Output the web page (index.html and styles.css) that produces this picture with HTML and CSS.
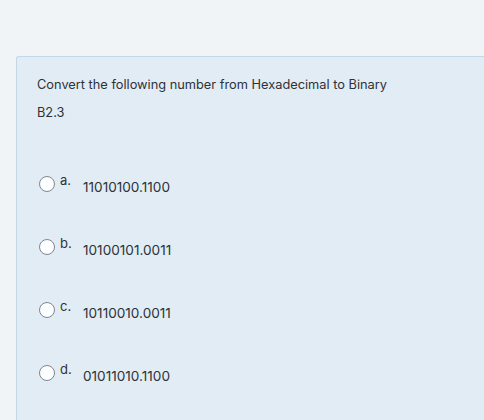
FILE: index.html
```html
<!DOCTYPE html>
<html>
<head>
<meta charset="utf-8">
<link rel="stylesheet" href="styles.css">
</head>
<body>
<div class="card">
  <p class="qtext">Convert the following number from Hexadecimal to Binary</p>
  <p class="qtext val">B2.3</p>
  <div class="answers">
    <label class="opt"><span class="radio"></span><span class="letter">a.</span><span class="ans">11010100.1100</span></label>
    <label class="opt"><span class="radio"></span><span class="letter">b.</span><span class="ans">10100101.0011</span></label>
    <label class="opt"><span class="radio"></span><span class="letter">c.</span><span class="ans">10110010.0011</span></label>
    <label class="opt"><span class="radio"></span><span class="letter">d.</span><span class="ans">01011010.1100</span></label>
  </div>
</div>
</body>
</html>
```

FILE: styles.css
```css
html, body {
  margin: 0;
  padding: 0;
  background: #f0f4f6;
  font-family: Inter, "Noto Sans", sans-serif;
  color: #2d3338;
}
body {
  padding: 56px 0 0 16px;
  overflow: hidden;
  height: 420px;
  box-sizing: border-box;
}
.card {
  background: #e2ecf5;
  border: 1px solid #c3d7e9;
  border-right: none;
  border-bottom: none;
  border-radius: 3px 0 0 0;
  padding: 18px 0 0 20px;
  height: 364px;
  box-sizing: border-box;
}
.qtext {
  margin: 0;
  font-size: 12.8px;
  line-height: 20px;
}
.val {
  margin-top: 8px;
}
.answers {
  display: flex;
  flex-direction: column;
  gap: 43px;
  margin-top: 51px;
}
.opt {
  display: flex;
  align-items: center;
  height: 20px;
  padding-left: 2px;
  font-size: 13px;
  line-height: 20px;
}
.radio {
  flex: 0 0 16px;
  width: 16px;
  height: 16px;
  border: 1.4px solid #80868e;
  border-radius: 50%;
  background: #fdfeff;
  box-sizing: border-box;
  margin-right: 5px;
}
.letter {
  align-self: flex-start;
  margin-top: -4px;
  width: 23px;
}
.ans {
  font-size: 13.6px;
  margin-top: 6px;
}
```
